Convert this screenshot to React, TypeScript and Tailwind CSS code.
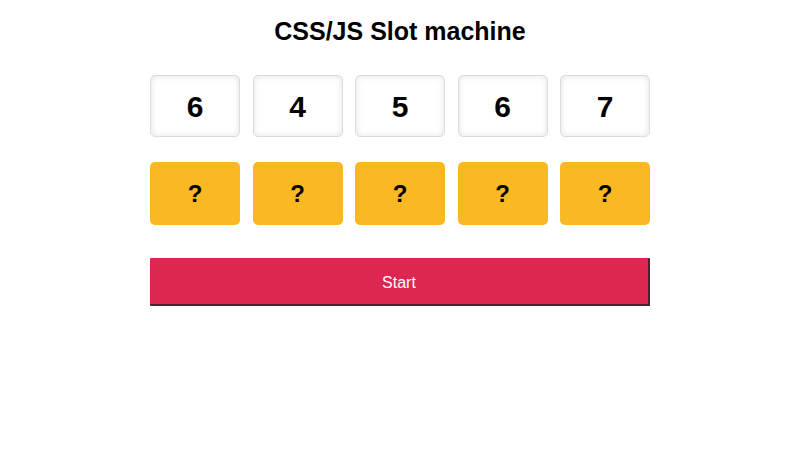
import React from "react";

const reels = [6, 4, 5, 6, 7];

export default function App() {
  return (
    <div className="min-h-[450px] bg-white font-['Liberation_Sans',Arial,sans-serif] text-black">
      <div className="mx-auto w-[500px] pt-[15px]">
        <h1 className="text-center text-[25px] font-bold leading-[32px]">
          CSS/JS Slot machine
        </h1>

        {/* reels */}
        <div className="mt-[28px] grid grid-cols-5 gap-[12.5px]">
          {reels.map((n, i) => (
            <div
              key={i}
              className="flex h-[62px] items-center justify-center rounded-[5px] border border-[#dcdcdc] bg-white text-[30px] font-bold shadow-[inset_0_0_6px_rgba(0,0,0,0.12)]"
            >
              {n}
            </div>
          ))}
        </div>

        {/* guesses */}
        <div className="mt-[25px] grid grid-cols-5 gap-[12.5px]">
          {reels.map((_, i) => (
            <div
              key={i}
              className="flex h-[63px] items-center justify-center rounded-[5px] bg-[#fab823] text-[24px] font-bold"
            >
              ?
            </div>
          ))}
        </div>

        <button className="mt-[33px] block h-[48px] w-full rounded-[1px] border-r-2 border-b-2 border-[#4a2333] bg-[#db2751] pt-[3px] text-[16px] text-white">
          Start
        </button>
      </div>
    </div>
  );
}
